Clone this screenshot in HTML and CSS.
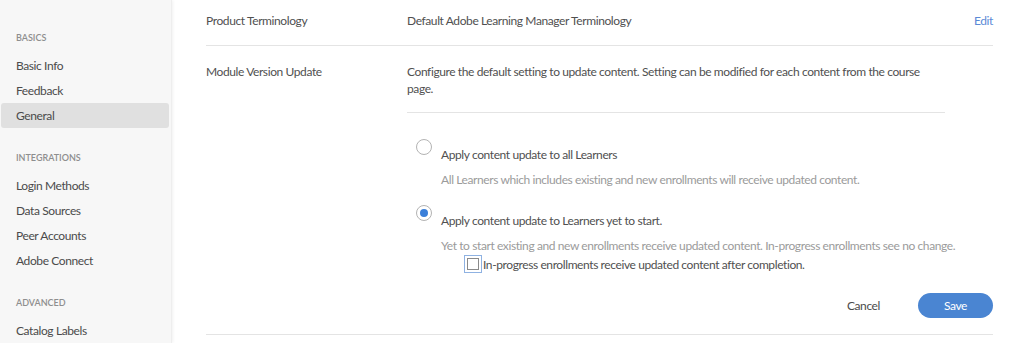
FILE: index.html
```html
<!DOCTYPE html>
<html lang="en">
<head>
    <meta charset="UTF-8">
    <title>General Settings</title>
    <link rel="stylesheet" href="styles.css">
</head>
<body>
    <div class="layout">
        <nav class="sidebar">
            <div class="nav-heading">Basics</div>
            <a class="nav-item">Basic Info</a>
            <a class="nav-item">Feedback</a>
            <a class="nav-item active">General</a>

            <div class="nav-heading">Integrations</div>
            <a class="nav-item">Login Methods</a>
            <a class="nav-item">Data Sources</a>
            <a class="nav-item">Peer Accounts</a>
            <a class="nav-item">Adobe Connect</a>

            <div class="nav-heading">Advanced</div>
            <a class="nav-item">Catalog Labels</a>
        </nav>

        <main class="content">
            <div class="setting-row">
                <div class="setting-label">Product Terminology</div>
                <div class="setting-value">Default Adobe Learning Manager Terminology</div>
                <a class="edit-link">Edit</a>
            </div>

            <div class="setting-row module-row">
                <div class="setting-label">Module Version Update</div>
                <div class="setting-body">
                    <p class="setting-desc">Configure the default setting to update content. Setting can be modified for each content from the course page.</p>

                    <div class="option">
                        <span class="radio"></span>
                        <div class="option-text">
                            <div class="option-title">Apply content update to all Learners</div>
                            <div class="option-hint">All Learners which includes existing and new enrollments will receive updated content.</div>
                        </div>
                    </div>

                    <div class="option">
                        <span class="radio checked"></span>
                        <div class="option-text">
                            <div class="option-title">Apply content update to Learners yet to start.</div>
                            <div class="option-hint">Yet to start existing and new enrollments receive updated content. In-progress enrollments see no change.</div>
                            <label class="check-row">
                                <span class="checkbox"></span>
                                In-progress enrollments receive updated content after completion.
                            </label>
                        </div>
                    </div>
                </div>
            </div>

            <div class="actions">
                <button class="btn-cancel">Cancel</button>
                <button class="btn-save">Save</button>
            </div>
        </main>
    </div>
</body>
</html>
```

FILE: styles.css
```css
body {
    margin: 0;
    font-family: 'Lato', 'Open Sans', sans-serif;
    font-size: 12px;
    letter-spacing: -0.4px;
    color: #4b4b4b;
    background: #fff;
    overflow: hidden;
}

.layout {
    display: flex;
    height: 343px;
}

/* sidebar */
.sidebar {
    width: 172px;
    flex-shrink: 0;
    background: #f7f7f7;
    box-shadow: 1px 0 3px rgba(0,0,0,0.06);
    border-right: 1px solid #eeeeee;
    padding-top: 31px;
    box-sizing: border-box;
}

.nav-heading {
    font-size: 9px;
    font-weight: 600;
    letter-spacing: 0;
    text-transform: uppercase;
    color: #8e8e8e;
    line-height: 14px;
    padding-left: 16px;
    margin-top: 23px;
    margin-bottom: 8px;
}

.nav-heading:first-child {
    margin-top: 0;
}

.nav-item {
    display: block;
    height: 25px;
    line-height: 25px;
    padding-left: 15px;
    margin: 0 2px 0 1px;
    border-radius: 3px;
    color: #4b4b4b;
}

.nav-item.active {
    background: #e0e0e0;
}

/* main */
.content {
    flex: 1;
    padding: 0 31px 0 34px;
}

.setting-row {
    display: flex;
    align-items: flex-start;
    border-bottom: 1px solid #e4e4e4;
    padding: 12px 0 16px;
    line-height: 17px;
}

.setting-label {
    width: 201px;
    flex-shrink: 0;
    color: #505050;
}

.setting-value {
    flex: 1;
    color: #505050;
}

.edit-link {
    color: #5b8ad6;
}

.module-row {
    padding: 17px 0 0;
    border-bottom: none;
}

.setting-body {
    width: 538px;
}

.setting-desc {
    margin: 0;
    padding-right: 20px;
    padding-bottom: 15px;
    border-bottom: 1px solid #e4e4e4;
    color: #505050;
}

.option {
    display: flex;
    align-items: flex-start;
    margin-left: 9px;
    margin-top: 26px;
}

.option + .option {
    margin-top: 17px;
}

.radio {
    width: 16px;
    height: 16px;
    box-sizing: border-box;
    border: 1px solid #b3b3b3;
    border-radius: 50%;
    background: #fff;
    flex-shrink: 0;
    margin-right: 9px;
    position: relative;
}

.radio.checked::after {
    content: "";
    position: absolute;
    left: 3px;
    top: 3px;
    width: 8px;
    height: 8px;
    border-radius: 50%;
    background: #3a7fd9;
}

.option-title {
    margin-top: 7px;
    color: #505050;
}

.option-hint {
    margin-top: 8px;
    color: #9b9b9b;
    white-space: nowrap;
}

.check-row {
    display: flex;
    align-items: center;
    margin-left: 23px;
    margin-top: 1px;
    color: #505050;
}

.checkbox {
    width: 18px;
    height: 18px;
    box-sizing: border-box;
    border: 1px solid #8fb2e2;
    margin-right: 1px;
    position: relative;
}

.checkbox::after {
    content: "";
    position: absolute;
    left: 2px;
    top: 2px;
    width: 12px;
    height: 12px;
    box-sizing: border-box;
    border: 1px solid #8a8a8a;
}

.actions {
    display: flex;
    justify-content: flex-end;
    align-items: center;
    padding: 20px 0 16px;
    border-bottom: 1px solid #e4e4e4;
}

.btn-cancel {
    font-family: inherit;
    font-size: 12px;
    letter-spacing: -0.4px;
    color: #4b4b4b;
    background: none;
    border: none;
    padding: 0 16px;
    margin-right: 22px;
}

.btn-save {
    font-family: inherit;
    font-size: 12px;
    letter-spacing: -0.4px;
    color: #fff;
    background: #4a85d2;
    border: none;
    border-radius: 13px;
    width: 75px;
    height: 25px;
}
```
